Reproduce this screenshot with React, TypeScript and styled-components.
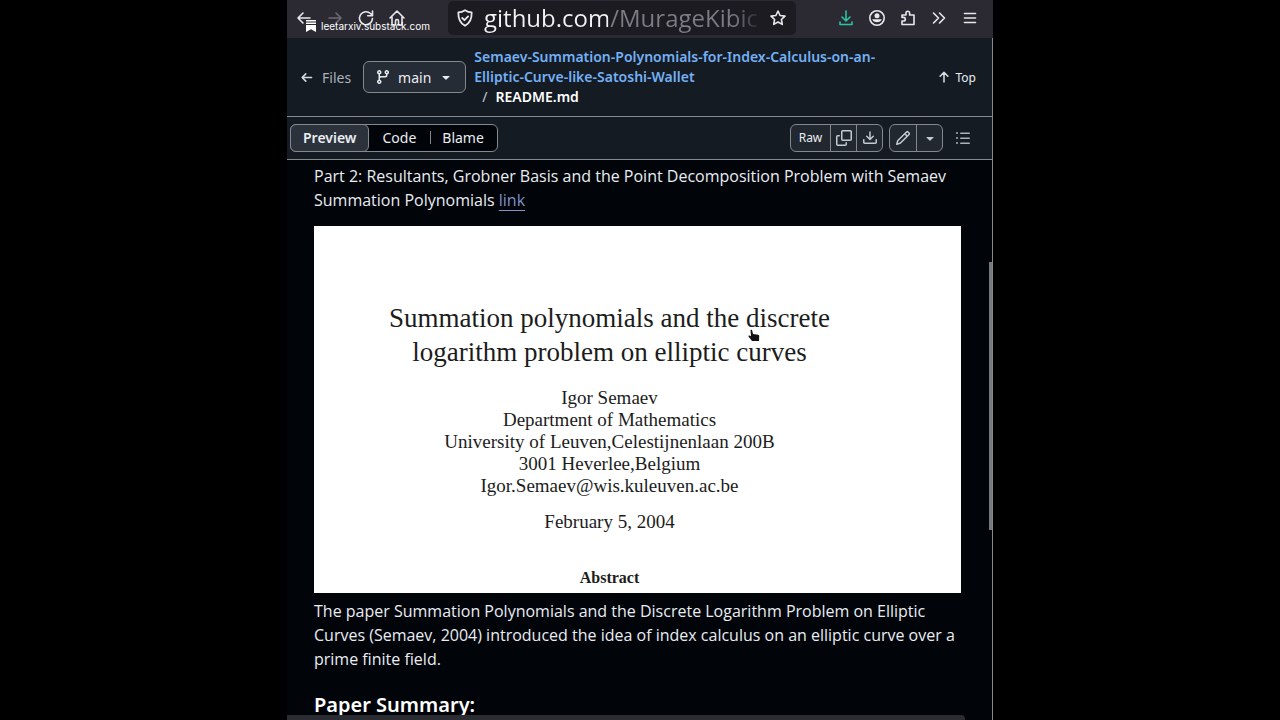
import React from "react";
import styled, { createGlobalStyle } from "styled-components";

const GlobalStyle = createGlobalStyle`
  *, *::before, *::after { box-sizing: border-box; }
  body {
    margin: 0;
    background: #000;
    color: #e9edf2;
    font-family: "Noto Sans", "Open Sans", sans-serif;
    overflow: hidden;
  }
  button { font: inherit; color: inherit; }
  svg { display: block; flex: none; }
`;

const Window = styled.main`
  position: relative;
  display: flex;
  flex-direction: column;
  max-width: 706px;
  height: 100vh;
  margin: 0 auto;
  overflow: hidden;
  background: #010409;
`;

const BrowserBar = styled.header`
  display: flex;
  flex: none;
  align-items: center;
  height: 38px;
  padding: 0 8px 3px 1px;
  background: #2b2a33;
  color: #e8e8ec;
`;

const IconButton = styled.button<{ $tone?: string }>`
  display: flex;
  align-items: center;
  justify-content: center;
  width: 31px;
  height: 28px;
  padding: 0;
  border: 0;
  background: none;
  color: ${(p) => p.$tone ?? "inherit"};
`;

const AddressBar = styled.div`
  display: flex;
  flex: 1;
  align-items: center;
  min-width: 0;
  height: 34px;
  margin: 0 34px 0 36px;
  padding: 0 3px 0 1px;
  border-radius: 5px;
  background: #1c1b22;
`;

const AddressInput = styled.input`
  flex: 1;
  min-width: 0;
  height: 34px;
  margin: 0 2px 0 4px;
  padding: 0;
  border: 0;
  outline: 0;
  background: linear-gradient(90deg, #f4f4f6 0 124px, #7d7c85 124px 250px, transparent 278px);
  background-clip: text;
  -webkit-background-clip: text;
  color: transparent;
  font: 24px/34px "Open Sans", "Noto Sans", sans-serif;
`;

const Watermark = styled.div`
  position: absolute;
  top: 19px;
  left: 19px;
  display: flex;
  align-items: center;
  gap: 5px;
  color: #fff;
  font: 400 10px/14px Inter, "Noto Sans", sans-serif;
`;

const Viewport = styled.div`
  display: flex;
  flex: 1;
  flex-direction: column;
  min-height: 0;
  border-right: 1px solid #85888c;
`;

const FileHeader = styled.div`
  display: flex;
  flex: none;
  align-items: center;
  height: 79px;
  padding: 0 16px 0 13px;
  border-bottom: 1px solid #85888c;
  background: #151b23;
`;

const FilesButton = styled.button`
  display: flex;
  align-items: center;
  gap: 9px;
  padding: 0;
  border: 0;
  background: none;
  color: #a9b1ba;
  font-size: 14px;
  white-space: nowrap;

  svg { color: #d5dae0; }
`;

const TopButton = styled(FilesButton)`
  gap: 5px;
  color: #e9edf2;
  font-size: 12px;
`;

const BranchButton = styled.button`
  display: flex;
  flex: none;
  align-items: center;
  gap: 7px;
  height: 32px;
  margin: 0 8px 0 12px;
  padding: 0 11px;
  border: 1px solid #85888c;
  border-radius: 6px;
  background: #262c36;
  font-size: 14px;
`;

const Breadcrumb = styled.nav`
  flex: 1;
  min-width: 0;
  font-size: 14px;
  font-weight: 600;
  line-height: 20px;
`;

const RepoLink = styled.a`
  display: block;
  color: #74b0f4;
  text-decoration: none;
`;

const FileName = styled.span`
  display: block;
  padding-left: 8px;
  color: #fff;
`;

const Slash = styled.span`
  margin-right: 8px;
  color: #c5cbd3;
  font-weight: 400;
`;

const Toolbar = styled.div`
  display: flex;
  flex: none;
  align-items: center;
  gap: 6px;
  height: 43px;
  padding: 0 15px 1px 3px;
  border-bottom: 1px solid #85888c;
  background: #151b23;
`;

const Tabs = styled.div`
  display: flex;
  align-items: center;
  height: 28px;
  margin-right: auto;
  padding-right: 12px;
  border: 1px solid #85888c;
  border-radius: 6px;
  background: #010409;
`;

const Tab = styled.button<{ $active?: boolean }>`
  height: 28px;
  margin: -1px 0 -1px -1px;
  padding: 0 ${(p) => (p.$active ? 12 : 13)}px;
  border: 1px solid ${(p) => (p.$active ? "#85888c" : "transparent")};
  border-radius: 6px;
  background: ${(p) => (p.$active ? "#2b323c" : "none")};
  font-size: 14px;
  font-weight: ${(p) => (p.$active ? 600 : 400)};
`;

const LastTab = styled(Tab)`
  padding: 0 0 0 11px;
`;

const TabDivider = styled.span`
  width: 1px;
  height: 13px;
  background: #85888c;
`;

const ButtonGroup = styled.div`
  display: flex;
  height: 28px;
  overflow: hidden;
  border: 1px solid #85888c;
  border-radius: 6px;
  background: #212830;
  color: #c4cad2;
`;

const GroupButton = styled.button`
  display: flex;
  align-items: center;
  justify-content: center;
  min-width: 26px;
  padding: 0;
  border: 0;
  background: none;
  font-size: 12px;

  & + & { border-left: 1px solid #85888c; }
`;

const RawButton = styled(GroupButton)`
  min-width: 39px;
  color: #e9edf2;
`;

const OutlineButton = styled(IconButton)`
  width: 28px;
  color: #a9b1ba;
`;

const Article = styled.article`
  flex: 1;
  min-height: 0;
  padding: 4px 31px 0 27px;
  overflow: hidden;
`;

const Paragraph = styled.p`
  margin: 0;
  font-family: "Open Sans", "Noto Sans", sans-serif;
  font-size: 16px;
  line-height: 24px;
`;

const TextLink = styled.a`
  color: #7e93c8;
  text-underline-offset: 4px;
  text-decoration-thickness: 1px;
`;

const Paper = styled.section`
  height: 367px;
  margin: 14px 0 6px;
  padding: 75px 56px 0 0;
  background: #fff;
  color: #1c1c1c;
  font-family: "Liberation Serif", serif;
  text-align: center;
`;

const PaperTitle = styled.h2`
  margin: 0 0 18px;
  font-size: 27px;
  font-weight: 400;
  line-height: 34px;
`;

const PaperText = styled.p`
  margin: 0 0 14px;
  font-size: 19px;
  line-height: 22px;
`;

const PaperAbstract = styled.h3`
  margin: 34px 0 0;
  font-size: 16px;
  line-height: 22px;
`;

const SectionTitle = styled.h2`
  margin: 21px 0 0;
  color: #fff;
  font-size: 20px;
  font-weight: 600;
  line-height: 26px;
`;

const ScrollThumb = styled.div`
  position: absolute;
  top: 262px;
  right: 1px;
  width: 3px;
  height: 268px;
  background: #76797d;
`;

const StatusStrip = styled.div`
  position: absolute;
  right: 28px;
  bottom: 0;
  left: 0;
  height: 5px;
  border-top-right-radius: 4px;
  background: #2b2c31;
`;

const Pointer = styled.svg`
  position: absolute;
  top: 329px;
  left: 461px;
`;

const Octicon = ({ paths, size = 16 }: { paths: string[]; size?: number }) => (
  <svg width={size} height={size} viewBox="0 0 16 16" fill="currentColor" aria-hidden="true">
    {paths.map((d) => (
      <path key={d} d={d} />
    ))}
  </svg>
);

const Line = ({ children, size = 18, width = 1.6 }: { children: React.ReactNode; size?: number; width?: number }) => (
  <svg
    width={size}
    height={size}
    viewBox="0 0 18 18"
    fill="none"
    stroke="currentColor"
    strokeWidth={width}
    strokeLinecap="round"
    strokeLinejoin="round"
    aria-hidden="true"
  >
    {children}
  </svg>
);

const icons = {
  branch: [
    "M9.5 3.25a2.25 2.25 0 1 1 3 2.122V6A2.5 2.5 0 0 1 10 8.5H6a1 1 0 0 0-1 1v1.128a2.251 2.251 0 1 1-1.5 0V5.372a2.25 2.25 0 1 1 1.5 0v1.836A2.493 2.493 0 0 1 6 7h4a1 1 0 0 0 1-1v-.628A2.25 2.25 0 0 1 9.5 3.25Zm-6 0a.75.75 0 1 0 1.5 0 .75.75 0 0 0-1.5 0Zm8.25-.75a.75.75 0 1 0 0 1.5.75.75 0 0 0 0-1.5ZM4.25 12a.75.75 0 1 0 0 1.5.75.75 0 0 0 0-1.5Z",
  ],
  caret: ["m4.427 7.427 3.396 3.396a.25.25 0 0 0 .354 0l3.396-3.396A.25.25 0 0 0 11.396 7H4.604a.25.25 0 0 0-.177.427Z"],
  copy: [
    "M0 6.75C0 5.784.784 5 1.75 5h1.5a.75.75 0 0 1 0 1.5h-1.5a.25.25 0 0 0-.25.25v7.5c0 .138.112.25.25.25h7.5a.25.25 0 0 0 .25-.25v-1.5a.75.75 0 0 1 1.5 0v1.5A1.75 1.75 0 0 1 9.25 16h-7.5A1.75 1.75 0 0 1 0 14.25Z",
    "M5 1.75C5 .784 5.784 0 6.75 0h7.5C15.216 0 16 .784 16 1.75v7.5A1.75 1.75 0 0 1 14.25 11h-7.5A1.75 1.75 0 0 1 5 9.25Zm1.75-.25a.25.25 0 0 0-.25.25v7.5c0 .138.112.25.25.25h7.5a.25.25 0 0 0 .25-.25v-7.5a.25.25 0 0 0-.25-.25Z",
  ],
  download: [
    "M2.75 14A1.75 1.75 0 0 1 1 12.25v-2.5a.75.75 0 0 1 1.5 0v2.5c0 .138.112.25.25.25h10.5a.25.25 0 0 0 .25-.25v-2.5a.75.75 0 0 1 1.5 0v2.5A1.75 1.75 0 0 1 13.25 14Z",
    "M7.25 7.689V2a.75.75 0 0 1 1.5 0v5.689l1.97-1.969a.749.749 0 1 1 1.06 1.06l-3.25 3.25a.749.749 0 0 1-1.06 0L4.22 6.78a.749.749 0 1 1 1.06-1.06l1.97 1.969Z",
  ],
  pencil: [
    "M11.013 1.427a1.75 1.75 0 0 1 2.474 0l1.086 1.086a1.75 1.75 0 0 1 0 2.474l-8.61 8.61c-.21.21-.47.364-.756.445l-3.251.93a.75.75 0 0 1-.927-.928l.929-3.25c.081-.286.235-.547.445-.758l8.61-8.61Zm.176 4.823L9.75 4.81l-6.286 6.287a.253.253 0 0 0-.064.108l-.558 1.953 1.953-.558a.253.253 0 0 0 .108-.064Zm1.238-3.763a.25.25 0 0 0-.354 0L10.811 3.75l1.439 1.44 1.263-1.263a.25.25 0 0 0 0-.354Z",
  ],
  list: [
    "M5.75 2.5h8.5a.75.75 0 0 1 0 1.5h-8.5a.75.75 0 0 1 0-1.5Zm0 5h8.5a.75.75 0 0 1 0 1.5h-8.5a.75.75 0 0 1 0-1.5Zm0 5h8.5a.75.75 0 0 1 0 1.5h-8.5a.75.75 0 0 1 0-1.5ZM2 14a1 1 0 1 1 0-2 1 1 0 0 1 0 2Zm1-6a1 1 0 1 1-2 0 1 1 0 0 1 2 0ZM2 4a1 1 0 1 1 0-2 1 1 0 0 1 0 2Z",
  ],
};

export default function App() {
  return (
    <>
      <GlobalStyle />
      <Window>
        <BrowserBar>
          <IconButton aria-label="Back">
            <Line><path d="M15 9H3M8 4L3 9l5 5" /></Line>
          </IconButton>
          <IconButton aria-label="Forward" $tone="#6c6b74">
            <Line><path d="M3 9h12M10 4l5 5-5 5" /></Line>
          </IconButton>
          <IconButton aria-label="Reload">
            <Line><path d="M15.500 9.500A6.500 6.500 0 1 1 13.500 4.500L15.500 6.500M15.500 2v4.800h-4.800" /></Line>
          </IconButton>
          <IconButton aria-label="Home">
            <Line><path d="M2 9l7-7 7 7M4 8v8h3.500v-4a1.500 1.500 0 0 1 3 0v4H14V8" /></Line>
          </IconButton>
          <AddressBar>
            <IconButton aria-label="Site protection">
              <Line size={20}>
                <path d="M9 2c2 1.300 4 1.900 6 2 .2 5.500-1.500 9.500-6 12-4.500-2.500-6.200-6.500-6-12 2-.1 4-.7 6-2zM6.500 9l2 2 3.300-3.500" />
              </Line>
            </IconButton>
            <AddressInput aria-label="Address" defaultValue="github.com/MurageKibicho" />
            <IconButton aria-label="Bookmark this page">
              <Line><path d="M9 2l2.100 4.500 4.900.6-3.600 3.400.9 4.900L9 13l-4.300 2.400.9-4.900L2 7.100l4.900-.6z" /></Line>
            </IconButton>
          </AddressBar>
          <IconButton aria-label="Downloads" $tone="#2ac3a2">
            <Line><path d="M9 2v10M5 8l4 4 4-4M3 13v2.500h12V13" /></Line>
          </IconButton>
          <IconButton aria-label="Account">
            <Line>
              <circle cx="9" cy="9" r="7.200" />
              <circle cx="9" cy="6.800" r="2.500" fill="currentColor" stroke="none" />
              <path d="M4.200 10.200h9.600c-1 4-8.600 4-9.600 0z" fill="currentColor" stroke="none" />
            </Line>
          </IconButton>
          <IconButton aria-label="Extensions">
            <Line><path d="M3 15.500v-3.500h1.500a1.800 1.800 0 0 0 0-3.600H3V6h4V4a1.800 1.800 0 0 1 3.600 0v2H15v9.500z" /></Line>
          </IconButton>
          <IconButton aria-label="More tools">
            <Line><path d="M3.500 4l5 5-5 5M9.500 4l5 5-5 5" /></Line>
          </IconButton>
          <IconButton aria-label="Menu">
            <Line><path d="M3.500 4.500h11M3.500 9h11M3.500 13.500h11" /></Line>
          </IconButton>
        </BrowserBar>

        <Viewport>
          <FileHeader>
            <FilesButton>
              <Line size={13} width={2.2}><path d="M16 9H3M8 4L3 9l5 5" /></Line>
              Files
            </FilesButton>
            <BranchButton>
              <Octicon paths={icons.branch} />
              main
              <Octicon paths={icons.caret} />
            </BranchButton>
            <Breadcrumb aria-label="Breadcrumb">
              <RepoLink href="#repository">
                Semaev-Summation-Polynomials-for-Index-Calculus-on-an-
                <br />
                Elliptic-Curve-like-Satoshi-Wallet
              </RepoLink>
              <FileName>
                <Slash>/</Slash>README.md
              </FileName>
            </Breadcrumb>
            <TopButton>
              <Line size={14} width={2}><path d="M9 15.500V3M4 8l5-5 5 5" /></Line>
              Top
            </TopButton>
          </FileHeader>

          <Toolbar>
            <Tabs>
              <Tab $active>Preview</Tab>
              <Tab>Code</Tab>
              <TabDivider />
              <LastTab>Blame</LastTab>
            </Tabs>
            <ButtonGroup>
              <RawButton>Raw</RawButton>
              <GroupButton aria-label="Copy raw file"><Octicon paths={icons.copy} /></GroupButton>
              <GroupButton aria-label="Download raw file"><Octicon paths={icons.download} /></GroupButton>
            </ButtonGroup>
            <ButtonGroup>
              <GroupButton aria-label="Edit file"><Octicon paths={icons.pencil} /></GroupButton>
              <GroupButton aria-label="More edit options"><Octicon paths={icons.caret} /></GroupButton>
            </ButtonGroup>
            <OutlineButton aria-label="Outline"><Octicon paths={icons.list} /></OutlineButton>
          </Toolbar>

          <Article>
            <Paragraph>
              Part 2: Resultants, Grobner Basis and the Point Decomposition Problem with Semaev
              <br />
              Summation Polynomials <TextLink href="#part-2">link</TextLink>
            </Paragraph>
            <Paper>
              <PaperTitle>
                Summation polynomials and the discrete
                <br />
                logarithm problem on elliptic curves
              </PaperTitle>
              <PaperText>
                Igor Semaev
                <br />
                Department of Mathematics
                <br />
                University of Leuven,Celestijnenlaan 200B
                <br />
                3001 Heverlee,Belgium
                <br />
                Igor.Semaev@wis.kuleuven.ac.be
              </PaperText>
              <PaperText>February 5, 2004</PaperText>
              <PaperAbstract>Abstract</PaperAbstract>
            </Paper>
            <Paragraph>
              The paper Summation Polynomials and the Discrete Logarithm Problem on Elliptic
              <br />
              Curves (Semaev, 2004) introduced the idea of index calculus on an elliptic curve over a
              <br />
              prime finite field.
            </Paragraph>
            <SectionTitle>Paper Summary:</SectionTitle>
          </Article>
        </Viewport>

        <Watermark>
          <svg width="10" height="12" viewBox="0 0 10 12" fill="#fff" aria-hidden="true">
            <path d="M0 0h10v1.500H0zM0 2.500h10V4H0zM0 5h10v7L5 9.200 0 12z" />
          </svg>
          leetarxiv.substack.com
        </Watermark>
        <ScrollThumb />
        <StatusStrip />
        <Pointer width="12" height="13" viewBox="0 0 12 13" aria-hidden="true">
          <path d="M2.500 1c1-.6 1.600 0 1.800 1L5 5l5 .8c1 .2 1.300.8 1.200 1.600L11 12H4L.5 7.500C.3 6.500 1.500 6.200 3 7.300z" fill="#111" />
        </Pointer>
      </Window>
    </>
  );
}
